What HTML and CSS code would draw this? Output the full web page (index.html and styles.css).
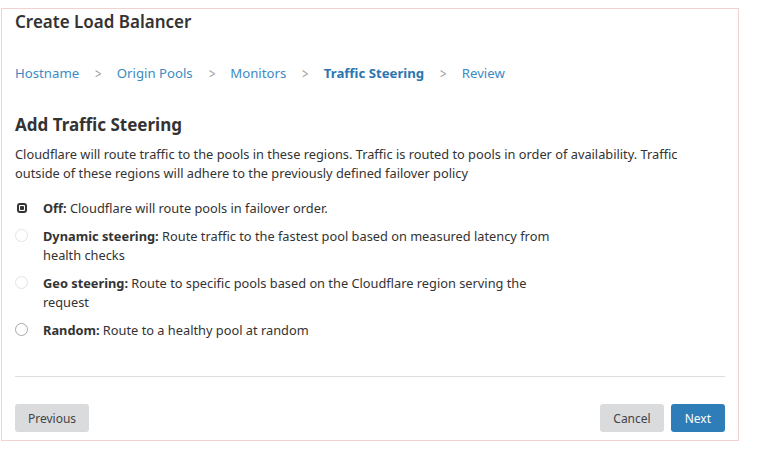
FILE: index.html
```html
<!DOCTYPE html>
<html lang="en">
<head>
    <meta charset="UTF-8">
    <title>Create Load Balancer</title>
    <link rel="stylesheet" href="styles.css">
</head>
<body>
    <div class="card">
        <h1 class="card-title">Create Load Balancer</h1>

        <nav class="steps">
            <span class="step">Hostname</span>
            <span class="chevron">&gt;</span>
            <span class="step">Origin Pools</span>
            <span class="chevron">&gt;</span>
            <span class="step">Monitors</span>
            <span class="chevron">&gt;</span>
            <span class="step current">Traffic Steering</span>
            <span class="chevron">&gt;</span>
            <span class="step">Review</span>
        </nav>

        <h2 class="section-title">Add Traffic Steering</h2>
        <p class="intro">Cloudflare will route traffic to the pools in these regions. Traffic is routed to pools in order of availability. Traffic outside of these regions will adhere to the previously defined failover policy</p>

        <div class="options">
            <label class="option">
                <span class="radio checked"></span>
                <span class="option-text"><b>Off:</b> Cloudflare will route pools in failover order.</span>
            </label>
            <label class="option">
                <span class="radio faint"></span>
                <span class="option-text"><b>Dynamic steering:</b> Route traffic to the fastest pool based on measured latency from health checks</span>
            </label>
            <label class="option">
                <span class="radio faint"></span>
                <span class="option-text"><b>Geo steering:</b> Route to specific pools based on the Cloudflare region serving the request</span>
            </label>
            <label class="option">
                <span class="radio"></span>
                <span class="option-text"><b>Random:</b> Route to a healthy pool at random</span>
            </label>
        </div>

        <hr class="divider">

        <div class="actions">
            <button class="btn">Previous</button>
            <div class="actions-right">
                <button class="btn">Cancel</button>
                <button class="btn primary">Next</button>
            </div>
        </div>
    </div>
</body>
</html>
```

FILE: styles.css
```css
body {
    margin: 0;
    background: #fff;
    font-family: "Noto Sans", "Open Sans", sans-serif;
    color: #333;
}
.card {
    margin: 8px 0 0 1px;
    width: 710px;
    height: 431px;
    border: 1px solid #f0d2ce;
    padding: 0 13px;
    display: flex;
    flex-direction: column;
}
.card-title {
    margin: 2px 0 0;
    font-size: 17px;
    line-height: 22px;
    font-weight: 600;
    color: #333;
}
.steps {
    margin-top: 31px;
    display: flex;
    align-items: center;
    font-size: 13.2px;
    line-height: 18px;
}
.step {
    color: #3d8ac4;
}
.step.current {
    color: #2b76b0;
    font-weight: 700;
}
.chevron {
    color: #999;
    font-size: 15px;
    margin: 0 14px 0 15px;
    transform: scaleX(0.75);
}
.section-title {
    margin: 32px 0 0;
    font-size: 17px;
    line-height: 22px;
    font-weight: 700;
    color: #333;
}
.intro {
    margin: 9px 0 0;
    font-size: 12.8px;
    line-height: 19px;
    width: 700px;
}
.options {
    margin-top: 16px;
    display: flex;
    flex-direction: column;
    gap: 9px;
    font-size: 12.8px;
    line-height: 19px;
}
.option {
    display: flex;
    align-items: flex-start;
}
.option-text {
    max-width: 518px;
}
.option-text b {
    font-weight: 700;
}
.radio {
    flex: none;
    width: 13px;
    height: 13px;
    margin: 2px 15px 0 0;
    border: 1px solid #a8a8a8;
    border-radius: 50%;
    box-sizing: border-box;
    position: relative;
}
.radio.faint {
    border-color: #e4e4e4;
}
.radio.checked {
    width: 10px;
    height: 10px;
    margin: 4px 16px 0 2px;
    border: 2px solid #333;
    border-radius: 3px;
}
.radio.checked::after {
    content: "";
    position: absolute;
    left: 1px;
    top: 1px;
    width: 4px;
    height: 4px;
    border-radius: 1px;
    background: #333;
}
.divider {
    margin: 36px 0 0;
    border: none;
    border-top: 1px solid #dedede;
}
.actions {
    margin-top: 27px;
    display: flex;
    justify-content: space-between;
}
.actions-right {
    display: flex;
    gap: 7px;
}
.btn {
    font-family: inherit;
    font-size: 12px;
    height: 28px;
    padding: 0 13px;
    border: none;
    border-radius: 3px;
    background: #d9dbdd;
    color: #444;
}
.btn.primary {
    padding: 0 14px;
    background: #2e7cb8;
    color: #fff;
}
```
